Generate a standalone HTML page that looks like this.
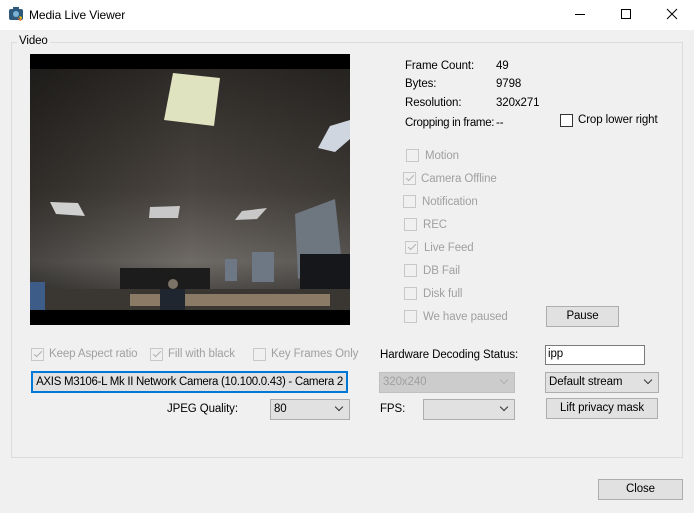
<!DOCTYPE html>
<html><head><meta charset="utf-8"><style>
*{box-sizing:border-box;margin:0;padding:0}
body{width:694px;height:513px;background:#f0f0f0;font-family:"Liberation Sans",sans-serif;font-size:11.5px;color:#000;position:relative;overflow:hidden;letter-spacing:-0.1px}
.a{position:absolute;white-space:nowrap}
.title{left:0;top:0;width:694px;height:30px;background:#fff}
.cb{position:absolute;width:13px;height:13px;border:1px solid #333;background:#fff}
.cb.d{border-color:#c8c8c8;background:#f0f0f0}
.ck{position:absolute;width:8px;height:4px;border-left:1px solid #b0b0b0;border-bottom:1px solid #b0b0b0;transform:rotate(-45deg)}
.dis{color:#a0a0a0}
.btn{position:absolute;background:#e1e1e1;border:1px solid #adadad;text-align:center;white-space:nowrap}
.sel{position:absolute;background:#e1e1e1;border:1px solid #adadad;padding-left:3px}
.chev{position:absolute;right:7px;top:4px;width:6px;height:6px;border-right:1px solid #333;border-bottom:1px solid #333;transform:rotate(45deg)}
</style></head><body>
<div class="a title"></div>
<svg class="a" style="left:8px;top:6px" width="16" height="16" viewBox="0 0 16 16"><rect x="1" y="3" width="14" height="11" rx="2" fill="#2d5a7a"/><rect x="5" y="1" width="6" height="3" fill="#2d5a7a"/><circle cx="8" cy="8" r="3" fill="#7ab3d6"/><path d="M9 11l5 3-2 1z" fill="#e63"/><path d="M11 10l3 1-1 3z" fill="#fc0"/></svg>
<div class="a" style="left:29px;top:8px;font-size:12px">Media Live Viewer</div>
<div class="a" style="left:575px;top:14px;width:10px;height:1px;background:#000"></div>
<div class="a" style="left:621px;top:9px;width:10px;height:10px;border:1px solid #000"></div>
<svg class="a" style="left:666px;top:8px" width="12" height="12"><path d="M1 1L11 11M11 1L1 11" stroke="#000" stroke-width="1"/></svg>

<div class="a" style="left:11px;top:42px;width:672px;height:416px;border:1px solid #dcdcdc"></div>
<div class="a" style="left:17px;top:35px;background:#f0f0f0;padding:0 2px">Video</div>

<svg class="a" style="left:30px;top:54px" width="320" height="271" viewBox="0 0 320 271">
<defs><linearGradient id="g" x1="0" y1="0" x2="0" y2="1"><stop offset="0" stop-color="#2e2b28"/><stop offset=".5" stop-color="#4a4540"/><stop offset=".8" stop-color="#6e6a66"/><stop offset="1" stop-color="#3a3836"/></linearGradient>
<linearGradient id="h" x1="0" y1="0" x2="1" y2="0"><stop offset="0" stop-color="#000" stop-opacity=".35"/><stop offset=".5" stop-color="#000" stop-opacity="0"/><stop offset="1" stop-color="#000" stop-opacity=".2"/></linearGradient></defs>
<rect width="320" height="271" fill="#000"/>
<rect y="15" width="320" height="241" fill="url(#g)"/>
<rect y="15" width="320" height="241" fill="url(#h)"/>
<path d="M143 19 L190 24 L184 72 L134 66Z" fill="#dfe3c0"/>
<path d="M300 72 L320 66 L320 85 L305 98 L288 94Z" fill="#cfd6e0"/>
<path d="M20 148 L48 149 L55 162 L26 160Z" fill="#d0d0d0"/>
<path d="M120 153 L150 152 L148 164 L119 164Z" fill="#c8c8c8"/>
<path d="M212 157 L237 154 L227 165 L205 166Z" fill="#c8c8c8"/>
<path d="M265 160 L305 145 L312 210 L268 225Z" fill="#6e7680"/>
<rect x="222" y="198" width="22" height="30" fill="#6e7884"/>
<rect x="195" y="205" width="12" height="22" fill="#6e7884"/>
<rect x="90" y="214" width="90" height="40" fill="#1c1c1c"/>
<rect x="270" y="200" width="50" height="55" fill="#15171a"/>
<rect x="0" y="235" width="320" height="21" fill="#3a3632"/>
<rect x="100" y="240" width="200" height="12" fill="#8a7a66"/>
<rect x="130" y="235" width="25" height="21" fill="#1f2630"/>
<circle cx="143" cy="230" r="5" fill="#7d7266"/>
<rect x="0" y="228" width="15" height="28" fill="#3d5c88"/>
</svg>

<div class="cb d" style="left:31px;top:348px"></div><div class="ck" style="left:34px;top:351px"></div>
<div class="a dis" style="left:49px;top:348px">Keep Aspect ratio</div>
<div class="cb d" style="left:150px;top:348px"></div><div class="ck" style="left:153px;top:351px"></div>
<div class="a dis" style="left:168px;top:348px">Fill with black</div>
<div class="cb d" style="left:253px;top:348px"></div>
<div class="a dis" style="left:271px;top:348px">Key Frames Only</div>

<div class="btn" style="left:31px;top:371px;width:317px;height:22px;border:2px solid #0078d7;line-height:18px;letter-spacing:-0.3px">AXIS M3106-L Mk II Network Camera (10.100.0.43) - Camera 2</div>
<div class="a" style="left:167px;top:403px">JPEG Quality:</div>
<div class="sel" style="left:270px;top:399px;width:80px;height:21px;line-height:19px">80<span class="chev"></span></div>

<div class="a" style="left:405px;top:60px">Frame Count:</div><div class="a" style="left:496px;top:60px">49</div>
<div class="a" style="left:405px;top:78px">Bytes:</div><div class="a" style="left:496px;top:78px">9798</div>
<div class="a" style="left:405px;top:97px">Resolution:</div><div class="a" style="left:496px;top:97px">320x271</div>
<div class="a" style="left:405px;top:117px;letter-spacing:-0.3px">Cropping in frame:</div><div class="a" style="left:496px;top:117px">--</div>
<div class="cb" style="left:560px;top:114px"></div><div class="a" style="left:578px;top:114px">Crop lower right</div>

<div class="cb d" style="left:406px;top:149px"></div><div class="a dis" style="left:425px;top:150px">Motion</div>
<div class="cb d" style="left:403px;top:172px"></div><div class="ck" style="left:406px;top:175px"></div><div class="a dis" style="left:421px;top:173px">Camera Offline</div>
<div class="cb d" style="left:403px;top:195px"></div><div class="a dis" style="left:422px;top:196px">Notification</div>
<div class="cb d" style="left:404px;top:218px"></div><div class="a dis" style="left:423px;top:219px">REC</div>
<div class="cb d" style="left:405px;top:241px"></div><div class="ck" style="left:408px;top:244px"></div><div class="a dis" style="left:424px;top:242px">Live Feed</div>
<div class="cb d" style="left:404px;top:264px"></div><div class="a dis" style="left:423px;top:265px">DB Fail</div>
<div class="cb d" style="left:404px;top:287px"></div><div class="a dis" style="left:423px;top:288px">Disk full</div>
<div class="cb d" style="left:404px;top:310px"></div><div class="a dis" style="left:423px;top:311px">We have paused</div>
<div class="btn" style="left:546px;top:306px;width:73px;height:21px;line-height:19px">Pause</div>

<div class="a" style="left:380px;top:349px">Hardware Decoding Status:</div>
<div class="a" style="left:545px;top:345px;width:100px;height:20px;background:#fff;border:1px solid #7a7a7a;padding:2px 2px">ipp</div>
<div class="sel dis" style="left:379px;top:372px;width:136px;height:21px;line-height:19px;background:#cccccc;border-color:#c0c0c0">320x240<span class="chev" style="border-color:#b0b0b0"></span></div>
<div class="sel" style="left:545px;top:372px;width:114px;height:21px;line-height:19px">Default stream<span class="chev"></span></div>
<div class="a" style="left:380px;top:403px">FPS:</div>
<div class="sel" style="left:423px;top:399px;width:92px;height:21px"><span class="chev"></span></div>
<div class="btn" style="left:546px;top:398px;width:112px;height:21px;line-height:19px">Lift privacy mask</div>

<div class="btn" style="left:598px;top:479px;width:85px;height:21px;line-height:19px">Close</div>
</body></html>
